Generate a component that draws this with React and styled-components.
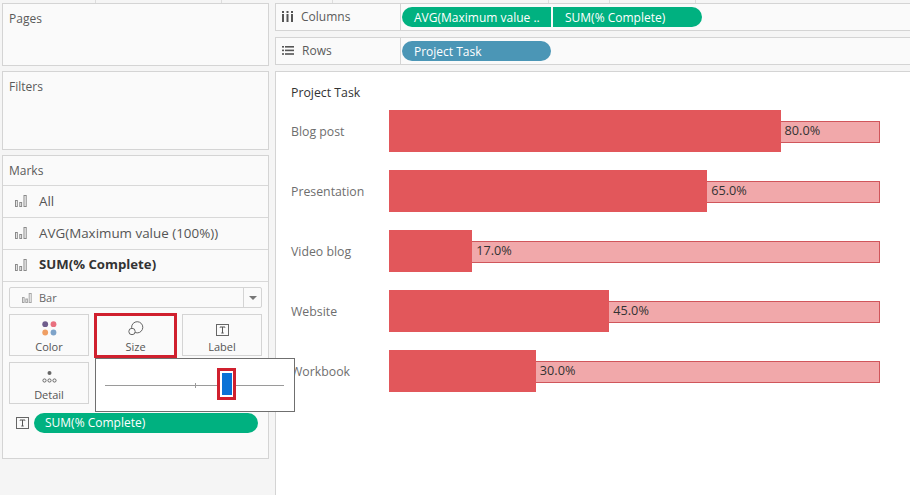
import React from "react";
import styled, { createGlobalStyle } from "styled-components";

const Global = createGlobalStyle`
  html, body { margin: 0; padding: 0; background: #f5f5f5; }
  body { font-family: "Open Sans", "Liberation Sans", sans-serif; }
  * { box-sizing: border-box; }
`;

const Page = styled.div`
  width: 910px; height: 495px; overflow: hidden; position: relative;
  display: grid; grid-template-columns: 268px 1fr; column-gap: 5px;
  padding: 3px 0 0 2px; background: #f5f5f5;
  font-size: 12px; color: #555;
`;
const tick = (x) => `linear-gradient(#ddd,#ddd) ${x}px 0/1px 3px no-repeat`;
const TopTicks = styled.div`
  position: absolute; left: 0; top: 0; width: 100%; height: 3px;
  background: ${[95, 221, 332, 548, 609, 695].map(tick).join(", ")};
`;
const Side = styled.div`
  display: flex; flex-direction: column; gap: 5px; width: 267px; position: relative;
`;
const Card = styled.section`
  background: #fafafa; border: 1px solid #d4d4d4; height: ${p => p.$h}px;
`;
const CardTitle = styled.div`
  padding: 7px 6px 0; font-size: 12px; line-height: 16px; color: #5a5a5a;
`;
const MarksTitle = styled.div`
  height: 30px; padding: 7px 6px 0; font-size: 12px; line-height: 16px; color: #5a5a5a;
  border-bottom: 1px solid #d8d8d8;
`;
const MarkRow = styled.div`
  height: 32px; display: flex; align-items: center; gap: 12px; padding: 0 0 1px 12px;
  border-bottom: 1px solid #d8d8d8; font-size: ${p => p.$bold ? 13.2 : 13.4}px;
  color: ${p => p.$bold ? "#333" : "#555"};
  font-weight: ${p => p.$bold ? 700 : 400};
`;
const MarkLabel = styled.span`
  transform: translateY(${p => p.$bold ? -1 : 0}px);
`;
const Select = styled.div`
  margin: 5px 6px 0; height: 21px; border: 1px solid #d4d4d4; border-radius: 2px;
  display: flex; align-items: center; padding-left: 12px; gap: 7px; font-size: 11px; color: #666;
`;
const SelectArrow = styled.div`
  margin-left: auto; width: 18px; height: 100%; border-left: 1px solid #d4d4d4;
  display: flex; align-items: center; justify-content: center;
  &::after { content: ""; border-left: 4px solid transparent; border-right: 4px solid transparent; border-top: 4px solid #777; }
`;
const Buttons = styled.div`
  display: grid; grid-template-columns: 80px 81px 80px; gap: 6px; margin: 6px 6px 0;
`;
const MarkBtn = styled.div`
  height: 42px; border: 1px solid #d4d4d4; display: flex; flex-direction: column; align-items: center;
  justify-content: flex-end; padding-bottom: 1px; font-size: 11px; line-height: 15px; color: #555; position: relative;
  gap: 3px;
`;
const RedFrame = styled.div`
  position: absolute; left: -2px; top: -2px; right: -2px; bottom: -3px; border: 3px solid #d0202e;
`;
const ShelfPillRow = styled.div`
  display: flex; align-items: center; margin: 9px 0 0 13px; gap: 5px;
`;
const Pill = styled.div`
  height: 20px; border-radius: ${p => p.$radius || "10px"}; background: ${p => p.$bg || "#00b180"};
  color: #fff; font-size: 12px; line-height: ${p => p.$lh || 20}px; padding-left: ${p => p.$pad || 12}px; width: ${p => p.$w}px; white-space: nowrap;
  overflow: hidden;
`;
const SizePopover = styled.div`
  position: absolute; left: 93px; top: 355px; width: 200px; height: 54px; background: #fff; border: 1px solid #6f6f6f;
`;
const SliderTrack = styled.div`
  position: absolute; left: 9px; top: 26px; width: 179px; height: 1px; background: #9a9a9a;
`;
const SliderTick = styled.div`
  position: absolute; left: 99px; top: 24px; width: 1px; height: 5px; background: #9a9a9a;
`;
const ThumbFrame = styled.div`
  position: absolute; left: 121px; top: 9px; width: 19px; height: 32px; border: 3px solid #d0202e; background: #fff;
  display: flex; align-items: center; justify-content: center;
`;
const Thumb = styled.div`
  width: 10px; height: 22px; background: #0a72d6;
`;
const Main = styled.div`
  display: flex; flex-direction: column; gap: 6px; min-width: 0;
`;
const Shelf = styled.div`
  height: 28px; display: grid; grid-template-columns: 125px 1fr; background: #fafafa; border: 1px solid #d4d4d4; border-right: 0;
`;
const ShelfLabel = styled.div`
  border-right: 1px solid #d4d4d4; display: flex; align-items: center; gap: 8px; padding: 0 0 1px 6px; font-size: 12px; color: #5a5a5a;
`;
const ShelfPills = styled.div`
  display: flex; align-items: center; gap: 2px; padding-left: 1px;
`;
const ChartPanel = styled.div`
  flex: 1; background: #fff; border: 1px solid #d4d4d4; border-right: 0; border-bottom: 0; padding: 12px 0 0 15px;
  display: flex; flex-direction: column;
`;
const AxisTitle = styled.div`
  font-size: 12.3px; line-height: 18px; height: 18px; color: #333;
`;
const Rows = styled.div`
  display: flex; flex-direction: column; gap: 18px; margin-top: 8px;
`;
const Row = styled.div`
  height: 42px; display: grid; grid-template-columns: 98px 491px; align-items: center;
`;
const RowLabel = styled.div`
  font-size: 12.3px; color: #6e6e6e; white-space: nowrap;
`;
const Track = styled.div`
  position: relative; height: 22px; background: #f1a8aa; border: 1px solid #d0565b; border-left: 0;
  font-size: 12.7px; line-height: 19px; color: #333; transform: translateY(1px);
`;
const Fill = styled.div`
  position: absolute; left: 0; top: -12px; height: 42px; background: #e2575b;
`;
const Value = styled.span`
  position: absolute; top: -1px; padding-left: 4px;
`;

const MarkIcon = () => (
  <svg width="12" height="12" viewBox="0 0 12 12" fill="none" stroke="#8a8a8a" strokeWidth="1">
    <rect x="0.5" y="5.5" width="1.8" height="6" /><rect x="4.8" y="7.5" width="1.8" height="4" /><rect x="9" y="0.5" width="2.2" height="11" />
  </svg>
);
const BarIcon = () => (
  <svg width="10" height="10" viewBox="0 0 10 10" fill="none" stroke="#a5a5a5" strokeWidth="1">
    <rect x="0.5" y="4.5" width="1.6" height="5" /><rect x="3.8" y="6" width="1.6" height="3.5" /><rect x="7.2" y="0.5" width="2" height="9" />
  </svg>
);
const ColorIcon = () => (
  <svg width="15" height="15" viewBox="0 0 15 15">
    <circle cx="3.2" cy="3.2" r="2.9" fill="#6f5d8c" /><circle cx="11.5" cy="3.2" r="2.9" fill="#e8707f" />
    <circle cx="3.2" cy="11.5" r="2.9" fill="#ef9e63" /><circle cx="11.5" cy="11.5" r="2.9" fill="#7ea3c9" />
  </svg>
);
const SizeIcon = () => (
  <svg width="16" height="15" viewBox="0 0 16 15" fill="none" stroke="#666" strokeWidth="1">
    <circle cx="9.2" cy="6.3" r="5.6" fill="#fafafa" /><circle cx="4" cy="10.5" r="3.2" fill="#fafafa" />
  </svg>
);
const TextIcon = () => (
  <svg width="13" height="12" viewBox="0 0 13 12" fill="none">
    <rect x="0.5" y="0.5" width="12" height="11" stroke="#666" />
    <path d="M4 3.5V3h5v.5M6.5 3v6M5.3 9h2.4" stroke="#555" />
  </svg>
);
const DetailIcon = () => (
  <svg width="15" height="14" viewBox="0 0 15 14" fill="none" stroke="#666">
    <circle cx="7.5" cy="3" r="2" fill="#666" stroke="none" />
    <circle cx="2.5" cy="10.5" r="1.6" /><circle cx="7.5" cy="10.5" r="1.6" /><circle cx="12.5" cy="10.5" r="1.6" />
  </svg>
);
const ColumnsIcon = () => (
  <svg width="11" height="11" viewBox="0 0 11 11" fill="#555">
    <rect x="0" y="3" width="2" height="8" /><rect x="4.5" y="3" width="2" height="8" /><rect x="9" y="3" width="2" height="8" />
    <rect x="0" y="0" width="2" height="2" /><rect x="4.5" y="0" width="2" height="2" /><rect x="9" y="0" width="2" height="2" />
  </svg>
);
const RowsIcon = () => (
  <svg width="12" height="9" viewBox="0 0 12 9" fill="#555">
    <rect x="0" y="0" width="2" height="1.6" /><rect x="3" y="0" width="9" height="1.6" />
    <rect x="0" y="3.6" width="2" height="1.6" /><rect x="3" y="3.6" width="9" height="1.6" />
    <rect x="0" y="7.2" width="2" height="1.6" /><rect x="3" y="7.2" width="9" height="1.6" />
  </svg>
);

const data = [
  ["Blog post", 80],
  ["Presentation", 65],
  ["Video blog", 17],
  ["Website", 45],
  ["Workbook", 30],
];
const PX_PER_PERCENT = 4.895;

export default function App() {
  return (
    <Page>
      <Global />
      <TopTicks />
      <Side>
        <Card $h={63}><CardTitle>Pages</CardTitle></Card>
        <Card $h={79}><CardTitle>Filters</CardTitle></Card>
        <Card $h={304}>
          <MarksTitle>Marks</MarksTitle>
          <MarkRow><MarkIcon /><MarkLabel>All</MarkLabel></MarkRow>
          <MarkRow><MarkIcon /><MarkLabel>AVG(Maximum value (100%))</MarkLabel></MarkRow>
          <MarkRow $bold><MarkIcon /><MarkLabel $bold>SUM(% Complete)</MarkLabel></MarkRow>
          <Select><BarIcon />Bar<SelectArrow /></Select>
          <Buttons>
            <MarkBtn><ColorIcon />Color</MarkBtn>
            <MarkBtn><SizeIcon />Size<RedFrame /></MarkBtn>
            <MarkBtn><TextIcon />Label</MarkBtn>
            <MarkBtn><DetailIcon />Detail</MarkBtn>
          </Buttons>
          <ShelfPillRow><TextIcon /><Pill $w={224} $pad={11}>SUM(% Complete)</Pill></ShelfPillRow>
        </Card>
        <SizePopover>
          <SliderTrack />
          <SliderTick />
          <ThumbFrame><Thumb /></ThumbFrame>
        </SizePopover>
      </Side>
      <Main>
        <Shelf>
          <ShelfLabel><ColumnsIcon />Columns</ShelfLabel>
          <ShelfPills>
            <Pill $w={149} $lh={21} $radius="10px 0 0 10px">AVG(Maximum value ..</Pill>
            <Pill $w={149} $lh={21} $radius="0 10px 10px 0">SUM(% Complete)</Pill>
          </ShelfPills>
        </Shelf>
        <Shelf>
          <ShelfLabel><RowsIcon />Rows</ShelfLabel>
          <ShelfPills><Pill $w={149} $lh={21} $bg="#4b96b6">Project Task</Pill></ShelfPills>
        </Shelf>
        <ChartPanel>
          <AxisTitle>Project Task</AxisTitle>
          <Rows>
            {data.map(([name, v]) => (
              <Row key={name}>
                <RowLabel>{name}</RowLabel>
                <Track>
                  <Fill style={{ width: `${v * PX_PER_PERCENT}px` }} />
                  <Value style={{ left: `${v * PX_PER_PERCENT}px` }}>{v.toFixed(1)}%</Value>
                </Track>
              </Row>
            ))}
          </Rows>
        </ChartPanel>
      </Main>
    </Page>
  );
}
